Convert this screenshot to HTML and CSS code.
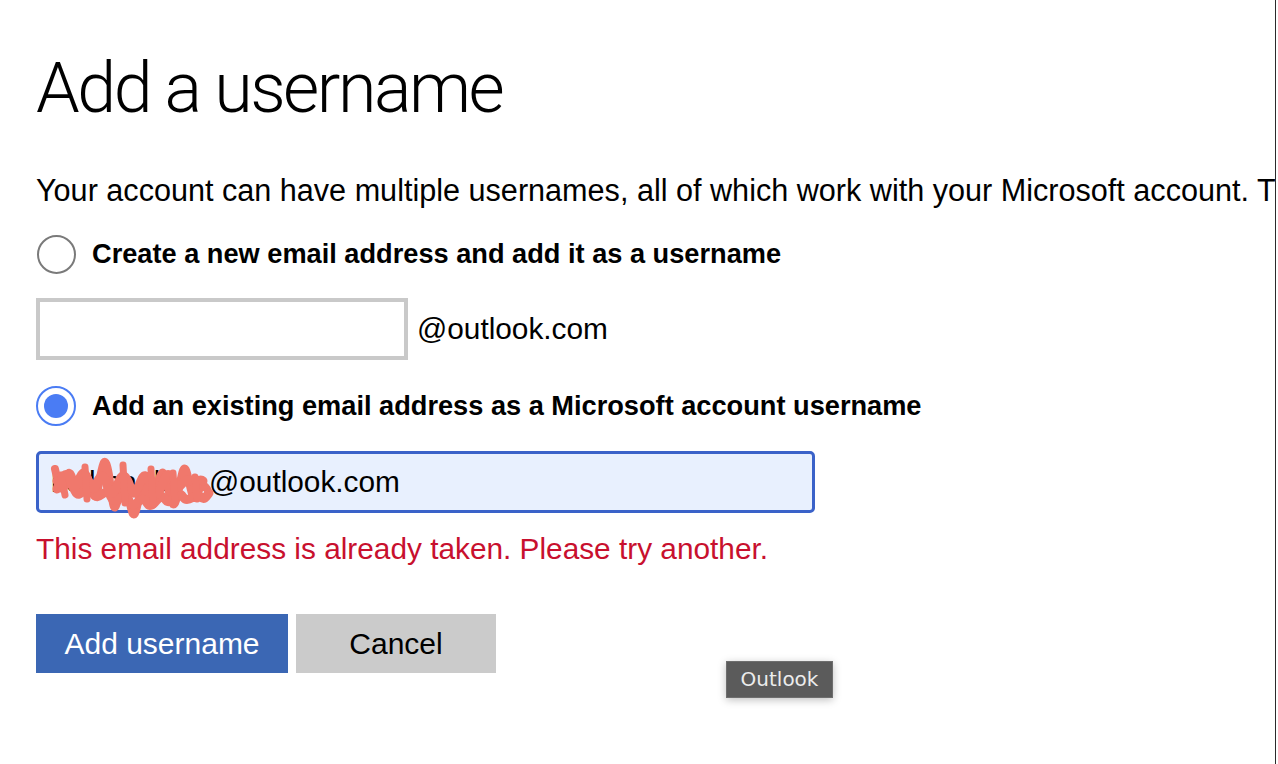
FILE: index.html
```html
<!DOCTYPE html>
<html lang="en">
<head>
<meta charset="utf-8">
<title>Add a username</title>
<link rel="stylesheet" href="styles.css">
</head>
<body>
<div class="page">
  <h1 class="title">Add a username</h1>
  <p class="intro">Your account can have multiple usernames, all of which work with your Microsoft account. They can be used to sign in.</p>

  <div class="option">
    <span class="radio"></span>
    <span class="option-label">Create a new email address and add it as a username</span>
  </div>
  <div class="field-row">
    <div class="textbox"></div>
    <span class="suffix">@outlook.com</span>
  </div>

  <div class="option option-second">
    <span class="radio radio-checked"><span class="radio-dot"></span></span>
    <span class="option-label">Add an existing email address as a Microsoft account username</span>
  </div>
  <div class="textbox textbox-focus">
    <span class="hidden-part">kellmaple</span><span>@outlook.com</span>
    <svg class="scribble" width="170" height="84" viewBox="0 0 170 84">
      <g fill="none" stroke="#f0786c" stroke-linecap="round" stroke-linejoin="round">
        <path stroke-width="8" d="M6 22 C10 40 14 52 18 30 C22 14 26 50 30 40 C34 30 36 24 40 34 C44 46 46 60 50 36 C54 14 56 6 60 28 C63 48 64 70 68 56 C72 40 74 30 78 44 C82 60 84 78 88 60 C92 42 94 30 98 46 C102 62 104 50 108 38 C112 24 114 20 118 36 C122 54 124 66 128 50 C132 34 134 12 138 26 C142 42 144 58 148 48 C152 38 154 36 158 42"/>
        <path stroke-width="9" d="M8 34 C14 46 20 26 26 44 C32 56 38 30 44 46 C50 58 56 36 62 50 C68 62 74 40 80 54 C86 66 92 44 98 56 C104 66 110 42 116 52 C122 62 128 40 134 50 C140 58 146 44 152 50 C156 54 158 48 160 46"/>
        <path stroke-width="9" d="M8 42 C12 30 18 20 22 36 C26 50 30 28 34 26 C38 24 42 48 46 40 C50 30 54 22 58 38 C62 54 66 44 70 34 C74 24 78 30 82 42 C86 54 90 36 94 30 C98 24 102 40 106 46 C110 52 114 32 118 28 C122 24 126 44 130 40 C134 36 138 30 142 34 C146 38 150 30 154 34"/>
        <path stroke-width="7" d="M12 28 L16 48 M36 20 L38 52 M74 18 L76 56 M102 22 L104 58 M124 26 L126 56 M146 30 L148 52"/>
      </g>
    </svg>
  </div>
  <p class="error">This email address is already taken. Please try another.</p>

  <div class="actions">
    <button class="btn btn-primary" type="button">Add username</button>
    <button class="btn btn-secondary" type="button">Cancel</button>
  </div>

  <div class="tooltip">Outlook</div>
</div>
</body>
</html>
```

FILE: styles.css
```css
html, body {
  margin: 0;
  padding: 0;
  background: #ffffff;
}

.page {
  position: relative;
  box-sizing: border-box;
  width: 1276px;
  height: 764px;
  padding: 0 0 0 36px;
  border-right: 1px solid #2b2b2b;
  overflow: hidden;
  font-family: "Liberation Sans", Arial, sans-serif;
  color: #000;
}

.title {
  margin: 0;
  padding-top: 48px;
  font-family: "Roboto", "Liberation Sans", sans-serif;
  font-weight: 300;
  font-size: 70px;
  line-height: 80px;
  letter-spacing: -2.5px;
}

.intro {
  margin: 44px 0 0;
  font-size: 30.6px;
  line-height: 36px;
  white-space: nowrap;
}

.option {
  display: flex;
  align-items: center;
  gap: 16px;
  margin-top: 26px;
  height: 40px;
}

.option-second {
  margin-top: 26px;
}

.radio {
  box-sizing: border-box;
  width: 39px;
  height: 39px;
  border: 2px solid #7a7a7a;
  border-radius: 50%;
  display: flex;
  align-items: center;
  justify-content: center;
  flex: none;
  margin-left: 1px;
}

.radio-checked {
  width: 40px;
  height: 40px;
  margin-left: 0;
  border: 2.5px solid #4a7cf4;
}

.radio-dot {
  width: 24px;
  height: 24px;
  border-radius: 50%;
  background: #4a7cf4;
}

.option-label {
  font-weight: bold;
  font-size: 27.2px;
}

.field-row {
  display: flex;
  align-items: center;
  gap: 9px;
  margin-top: 24px;
}

.textbox {
  box-sizing: border-box;
  width: 372px;
  height: 62px;
  border: 4px solid #c9c9c9;
  background: #fff;
}

.suffix {
  font-size: 29.8px;
}

.textbox-focus {
  position: relative;
  width: 779px;
  margin-top: 25px;
  border: 3.5px solid #3a62c9;
  border-radius: 5px;
  background: #e8f0fe;
  padding-left: 12px;
  font-size: 29.8px;
  line-height: 55px;
  display: flex;
  white-space: nowrap;
}

.hidden-part {
  width: 158px;
  overflow: hidden;
}

.scribble {
  position: absolute;
  left: 10px;
  top: -7px;
}

.error {
  margin: 19px 0 0;
  color: #c8102e;
  font-size: 29.8px;
  line-height: 34px;
}

.actions {
  display: flex;
  gap: 8px;
  margin-top: 48px;
}

.btn {
  height: 59px;
  border: none;
  border-radius: 0;
  font-family: "Liberation Sans", Arial, sans-serif;
  font-size: 30px;
  padding: 0;
  cursor: pointer;
}

.btn-primary {
  width: 252px;
  background: #3b67b4;
  color: #fff;
}

.btn-secondary {
  width: 200px;
  background: #cbcbcb;
  color: #000;
}

.tooltip {
  position: absolute;
  left: 726px;
  top: 661px;
  box-sizing: border-box;
  width: 107px;
  height: 37px;
  background: #5b5b5b;
  border: 1px solid #6e6e6e;
  color: #ececec;
  font-family: "DejaVu Sans", "Liberation Sans", sans-serif;
  font-size: 20px;
  line-height: 35px;
  text-align: center;
  box-shadow: 0 2px 8px rgba(0, 0, 0, 0.25);
}
```
